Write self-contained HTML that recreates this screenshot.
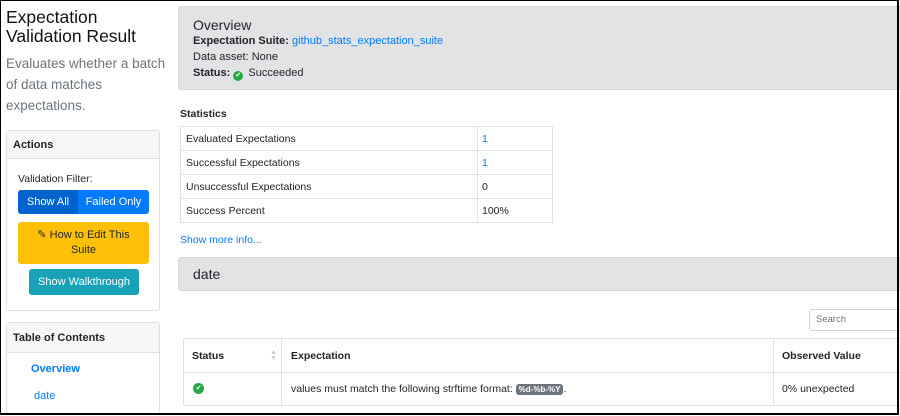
<!DOCTYPE html>
<html><head><meta charset="utf-8"><style>
*{box-sizing:border-box;margin:0;padding:0}
body{width:900px;height:416px;overflow:hidden;background:#fff;font-family:"Liberation Sans",sans-serif;color:#212529;position:relative;font-size:11px}
.frame{position:absolute;left:0;top:0;width:899px;height:415px;border:1px solid #000;border-right:2px solid #000;border-bottom:2px solid #000;pointer-events:none;z-index:10}
.abs{position:absolute}
a{color:#007bff;text-decoration:none}
.card{position:absolute;border:1px solid #dfdfdf;border-radius:3px;background:#fff}
.card .hd{background:#f7f7f7;border-bottom:1px solid #dfdfdf;font-weight:bold;font-size:11px;padding:0 6px}
.btn{position:absolute;color:#fff;font-size:11px;text-align:center;border-radius:3px}
table{border-collapse:collapse}
td,th{border:1px solid #dee2e6;text-align:left}
</style></head><body>
<div class="frame"></div>
<div class="abs" style="left:6px;top:8px;font-size:17.5px;line-height:19px;color:#111">Expectation<br>Validation Result</div>
<div class="abs" style="left:6px;top:53px;font-size:13.5px;line-height:21px;color:#6c757d;font-weight:300">Evaluates whether a batch<br>of data matches<br>expectations.</div>

<div class="card" style="left:6px;top:130px;width:154px;height:181px">
 <div class="hd" style="height:28px;line-height:28px">Actions</div>
 <div class="abs" style="left:11px;top:42px;font-size:10.5px">Validation Filter:</div>
 <div class="btn" style="left:11px;top:59px;width:60px;height:24px;line-height:24px;background:#0062cc;border-radius:3px 0 0 3px">Show All</div>
 <div class="btn" style="left:71px;top:59px;width:71px;height:24px;line-height:24px;background:#007bff;border-radius:0 3px 3px 0">Failed Only</div>
 <div class="btn" style="left:11px;top:91px;width:131px;height:42px;line-height:15px;padding-top:6px;background:#ffc107;color:#212529">&#9998; How to Edit This<br>Suite</div>
 <div class="btn" style="left:22px;top:138px;width:110px;height:26px;line-height:26px;background:#17a2b8">Show Walkthrough</div>
</div>

<div class="card" style="left:6px;top:322px;width:154px;height:92px">
 <div class="hd" style="height:30px;line-height:30px">Table of Contents</div>
 <div class="abs" style="left:24px;top:40px;font-weight:bold;color:#007bff">Overview</div>
 <div class="abs" style="left:27px;top:67px;color:#007bff">date</div>
</div>

<div class="abs" style="left:178px;top:6px;width:730px;height:84px;background:#e2e3e5;border:1px solid #d6d8db;border-radius:3px;padding:9px 14px;line-height:16px;font-size:11px">
 <div style="font-size:14px;line-height:18px;margin-bottom:-1px">Overview</div>
 <div><b>Expectation Suite:</b> <a>github_stats_expectation_suite</a></div>
 <div>Data asset: None</div>
 <div><b>Status:</b> <span style="display:inline-block;width:10px;height:10px;border-radius:50%;background:#28a745;color:#fff;font-size:7px;line-height:10px;text-align:center;vertical-align:-1px;margin-right:2px">&#10004;</span> Succeeded</div>
</div>

<div class="abs" style="left:180px;top:108px;font-weight:bold;font-size:10.5px">Statistics</div>
<table class="abs" style="left:180px;top:126px;width:373px;font-size:10.5px">
<tr style="height:24px"><td style="width:297px;padding-left:5px">Evaluated Expectations</td><td style="padding-left:4px;color:#007bff">1</td></tr>
<tr style="height:24px"><td style="padding-left:5px">Successful Expectations</td><td style="padding-left:4px;color:#007bff">1</td></tr>
<tr style="height:24px"><td style="padding-left:5px">Unsuccessful Expectations</td><td style="padding-left:4px">0</td></tr>
<tr style="height:24px"><td style="padding-left:5px">Success Percent</td><td style="padding-left:4px">100%</td></tr>
</table>
<div class="abs" style="left:180px;top:234px;color:#007bff;font-size:10.5px">Show more info...</div>

<div class="abs" style="left:178px;top:257px;width:730px;height:34px;background:#e2e3e5;border:1px solid #d6d8db;border-radius:3px;padding-left:14px;line-height:32px;font-size:14px">date</div>

<div class="abs" style="left:809px;top:309px;width:100px;height:22px;border:1px solid #ced4da;border-radius:3px;padding-left:6px;line-height:20px;font-size:9.5px;color:#6c757d">Search</div>

<table class="abs" style="left:183px;top:338px;width:730px;font-size:10.5px">
<tr style="height:34px"><th style="width:98px;padding-left:8px;position:relative">Status<span style="position:absolute;right:4px;top:11px;color:#ccc;font-size:7px;line-height:6px">▲<br>▼</span></th><th style="width:492px;padding-left:9px">Expectation</th><th style="padding-left:8px">Observed Value</th></tr>
<tr style="height:33px"><td style="padding-left:9px"><span style="display:inline-block;width:11px;height:11px;border-radius:50%;background:#28a745;color:#fff;font-size:7px;line-height:11px;text-align:center;vertical-align:2px">&#10004;</span></td><td style="padding-left:9px">values must match the following strftime format: <span style="background:#6c757d;color:#fff;font-size:8px;font-weight:bold;padding:1px 3px;border-radius:3px">%d-%b-%Y</span>.</td><td style="padding-left:8px">0% unexpected</td></tr>
</table>
</body></html>
